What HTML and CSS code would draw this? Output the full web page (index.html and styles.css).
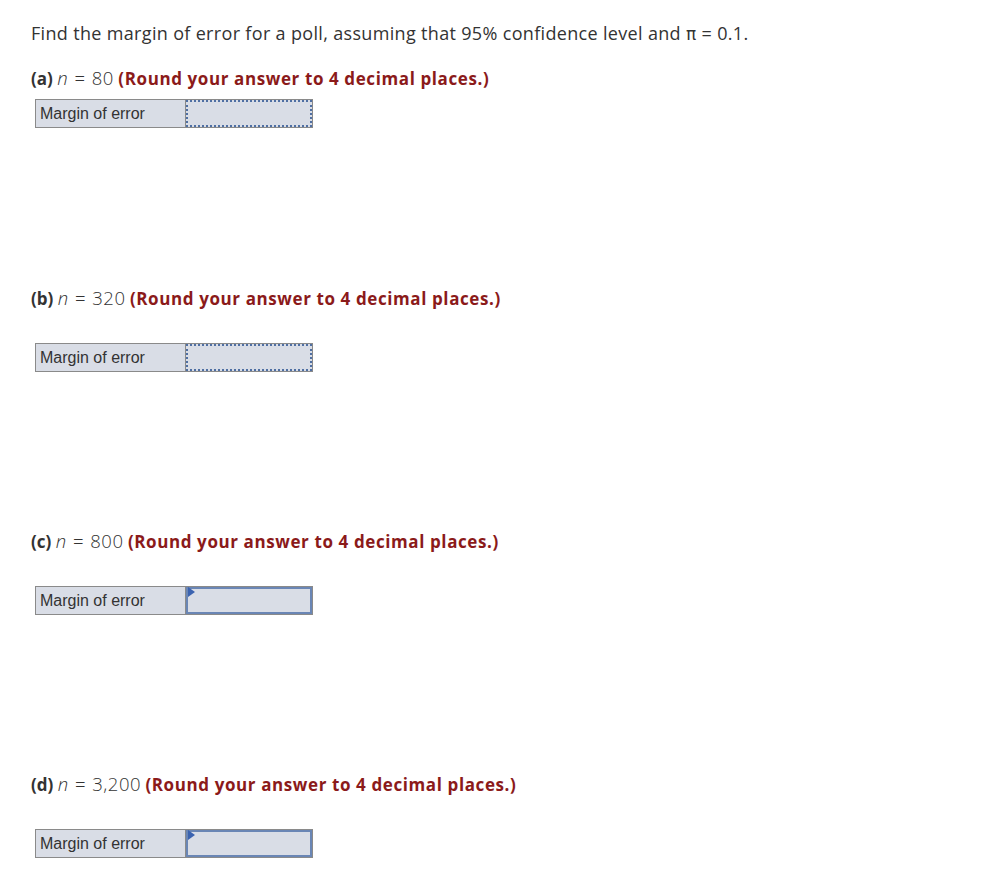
FILE: index.html
```html
<!DOCTYPE html>
<html>
<head>
<meta charset="utf-8">
<link rel="stylesheet" href="styles.css">
</head>
<body>
<div class="page">
  <p class="intro">Find the margin of error for a poll, assuming that 95% confidence level and <span class="pi">π</span> = 0.1.</p>

  <section class="part part-a">
    <h2 class="q"><span class="lbl">(a)</span> <span class="eq"><i class="var">n</i> = 80</span> <span class="note">(Round your answer to 4 decimal places.)</span></h2>
    <div class="answer">
      <div class="cell-label">Margin of error</div>
      <div class="cell-input dotted"></div>
    </div>
  </section>

  <section class="part part-b">
    <h2 class="q"><span class="lbl">(b)</span> <span class="eq"><i class="var">n</i> = 320</span> <span class="note">(Round your answer to 4 decimal places.)</span></h2>
    <div class="answer">
      <div class="cell-label">Margin of error</div>
      <div class="cell-input dotted"></div>
    </div>
  </section>

  <section class="part part-c">
    <h2 class="q"><span class="lbl">(c)</span> <span class="eq"><i class="var">n</i> = 800</span> <span class="note">(Round your answer to 4 decimal places.)</span></h2>
    <div class="answer">
      <div class="cell-label">Margin of error</div>
      <div class="cell-input solid"><span class="flag"></span></div>
    </div>
  </section>

  <section class="part part-d">
    <h2 class="q"><span class="lbl">(d)</span> <span class="eq"><i class="var">n</i> = 3,200</span> <span class="note">(Round your answer to 4 decimal places.)</span></h2>
    <div class="answer">
      <div class="cell-label">Margin of error</div>
      <div class="cell-input solid"><span class="flag"></span></div>
    </div>
  </section>
</div>
</body>
</html>
```
FILE: styles.css
```css
html, body {
  margin: 0;
  padding: 0;
  background: #ffffff;
}
.page {
  padding: 22px 0 0 31px;
  font-family: "Open Sans", Lato, sans-serif;
  color: #333333;
}
.intro {
  margin: 0;
  font-size: 18px;
  line-height: 22px;
  letter-spacing: 0.33px;
  color: #333333;
}
.pi {
  font-family: "DejaVu Sans", sans-serif;
  font-size: 17px;
}
.part {
  display: flex;
  flex-direction: column;
}
.q {
  margin: 0;
  height: 22px;
  font-size: 17px;
  line-height: 22px;
  font-weight: 400;
  color: #333333;
  white-space: nowrap;
}
.lbl {
  font-weight: 700;
}
.eq {
  font-size: 18.5px;
  line-height: 16px;
  font-weight: 300;
  letter-spacing: 0.5px;
  word-spacing: 1px;
}
.var {
  font-style: italic;
}
.note {
  font-weight: 700;
  letter-spacing: 0.6px;
  color: #8b1a1a;
}
.part-a { margin-top: 23px; }
.part-b { margin-top: 160px; }
.part-c { margin-top: 159px; }
.part-d { margin-top: 159px; }
.part-a .answer { margin-top: 9px; }
.part-b .answer,
.part-c .answer,
.part-d .answer { margin-top: 33px; }

.answer {
  display: flex;
  width: 278px;
  height: 29px;
  margin-left: 4px;
  box-sizing: border-box;
  border: 1px solid #8a8a8a;
  background: #d9dde6;
}
.cell-label {
  width: 150px;
  box-sizing: border-box;
  padding-left: 4px;
  font-family: "Liberation Sans", Arial, sans-serif;
  font-size: 16px;
  line-height: 27px;
  color: #333333;
  border-right: 1px solid #8a8a8a;
}
.cell-input {
  flex: 1;
  position: relative;
  box-sizing: border-box;
  background: #d9dde6;
}
.cell-input.dotted {
  border: 2px dotted #4f6fa3;
}
.cell-input.solid {
  border: 2px solid #6a86b5;
}
.flag {
  position: absolute;
  left: 0;
  top: -2px;
  width: 0;
  height: 0;
  border-top: 5px solid transparent;
  border-bottom: 5px solid transparent;
  border-left: 7px solid #3b63b0;
}
```
